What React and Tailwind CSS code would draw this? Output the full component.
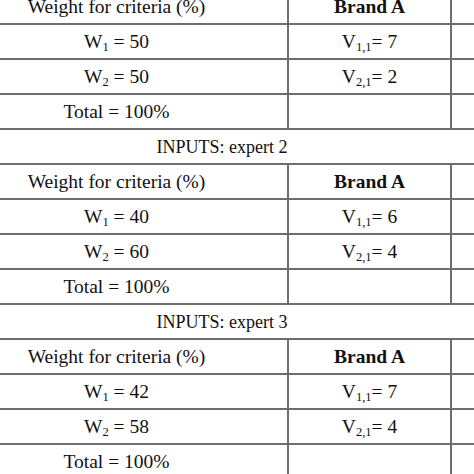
import React from "react";

const blocks = [
  { title: null, w: ["50", "50"], v: ["7", "2"] },
  { title: "INPUTS: expert 2", w: ["40", "60"], v: ["6", "4"] },
  { title: "INPUTS: expert 3", w: ["42", "58"], v: ["7", "4"] },
];

function Row({ a, b, bold }) {
  return (
    <div className="grid grid-cols-[343px_163px_1fr] h-[35px] border-b-2 border-[#6e6e6e] text-[19.5px]">
      <div className="flex items-center justify-center border-r-2 border-[#6e6e6e]">{a}</div>
      <div className={"flex items-center justify-center border-r-2 border-[#6e6e6e]" + (bold ? " font-bold" : "")}>{b}</div>
      <div></div>
    </div>
  );
}

function Sub({ children }) {
  return <sub className="text-[12.5px]">{children}</sub>;
}

export default function App() {
  return (
    <div className="w-[474px] h-[474px] overflow-hidden bg-white text-[#111] text-[18px] leading-none" style={{ fontFamily: '"Liberation Serif", "Times New Roman", serif' }}>
      <div className="w-[552px] ml-[-54px] mt-[-12px]">
        {blocks.map((blk, i) => (
          <div key={i}>
            {blk.title && (
              <div className="h-[33px] flex items-center justify-center">{blk.title}</div>
            )}
            <div className="border-t-2 border-[#6e6e6e]">
              <Row a="Weight for criteria (%)" b="Brand A" bold />
              <Row
                a={<span>W<Sub>1</Sub> = {blk.w[0]}</span>}
                b={<span>V<Sub>1,1</Sub>= {blk.v[0]}</span>}
              />
              <Row
                a={<span>W<Sub>2</Sub> = {blk.w[1]}</span>}
                b={<span>V<Sub>2,1</Sub>= {blk.v[1]}</span>}
              />
              <Row a="Total = 100%" b="" />
            </div>
          </div>
        ))}
      </div>
    </div>
  );
}
